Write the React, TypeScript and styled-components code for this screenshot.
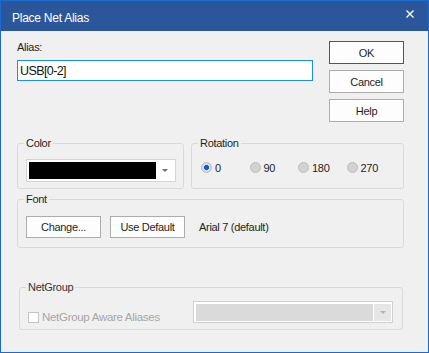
import React from "react";
import styled, { createGlobalStyle } from "styled-components";

const GlobalStyle = createGlobalStyle`
  html, body {
    margin: 0;
    padding: 0;
    background: #ffffff;
  }
  * {
    box-sizing: border-box;
  }
`;

const Window = styled.div`
  width: 429px;
  height: 353px;
  display: flex;
  flex-direction: column;
  border: 1px solid #1b6ad0;
  background: #f0f0f0;
  font-family: "Liberation Sans", Arial, sans-serif;
  font-size: 11px;
  color: #1e1e1e;
  letter-spacing: -0.3px;
`;

const TitleBar = styled.div`
  height: 30px;
  flex: 0 0 30px;
  display: flex;
  align-items: center;
  justify-content: space-between;
  padding: 4px 11px 0 11px;
  background: #2b579a;
  color: #ffffff;
  font-size: 12px;
  letter-spacing: -0.25px;
`;

const CloseIcon = styled.svg`
  width: 8px;
  height: 8px;
  margin-top: -9px;
  margin-right: 3px;
`;

const Body = styled.div`
  flex: 1;
  display: flex;
  flex-direction: column;
  padding: 10px 24px 0 16px;
`;

const TopRow = styled.div`
  display: flex;
  gap: 16px;
`;

const AliasCol = styled.div`
  flex: 0 0 296px;
  display: flex;
  flex-direction: column;
`;

const Label = styled.div`
  line-height: 13px;
  height: 13px;
  margin-bottom: 6px;
`;

const TextInput = styled.div`
  height: 21px;
  border: 1px solid #1a8cff;
  background: #ffffff;
  padding: 0 2px;
  display: flex;
  align-items: center;
  font-size: 12.5px;
  letter-spacing: -0.6px;
  color: #111;
`;

const BtnCol = styled.div`
  display: flex;
  flex-direction: column;
  gap: 6px;
`;

const Button = styled.div<{ $primary?: boolean; $h?: number }>`
  width: 75px;
  height: ${(p) => p.$h ?? 23}px;
  display: flex;
  align-items: center;
  justify-content: center;
  background: #fdfdfd;
  border: 1px solid ${(p) => (p.$primary ? "#0f62c6" : "#adadad")};
  color: #1e1e1e;
`;

const GroupRow = styled.div`
  display: flex;
  gap: 7px;
  margin-top: 14px;
`;

const Group = styled.fieldset<{ $w?: number; $h: number; $pt: number }>`
  margin: 0;
  ${(p) => (p.$w ? `width: ${p.$w}px; flex: 0 0 ${p.$w}px;` : "")}
  height: ${(p) => p.$h}px;
  border: 1px solid #d9d9d9;
  border-radius: 3px;
  padding: ${(p) => p.$pt}px 8px 0 8px;
  min-width: 0;
`;

const Legend = styled.legend<{ $muted?: boolean }>`
  padding: 0 2px;
  margin-left: -2px;
  line-height: 14px;
  font-size: 11px;
  color: ${(p) => (p.$muted ? "#333" : "#1e1e1e")};
`;

const ColorCombo = styled.div`
  width: 150px;
  height: 23px;
  border: 1px solid #d4d4d4;
  background: #ffffff;
  display: flex;
  align-items: center;
  padding: 0 2px;
`;

const Swatch = styled.div`
  width: 127px;
  height: 17px;
  background: #000000;
`;

const ArrowBox = styled.div<{ $disabled?: boolean }>`
  flex: 1;
  align-self: stretch;
  display: flex;
  align-items: center;
  justify-content: center;
  background: ${(p) => (p.$disabled ? "#e6e6e6" : "transparent")};
  &::after {
    content: "";
    border-left: 3px solid transparent;
    border-right: 3px solid transparent;
    border-top: 3px solid ${(p) => (p.$disabled ? "#b4b4b4" : "#707070")};
  }
`;

const RadioRow = styled.div`
  display: flex;
  height: 13px;
  margin-left: 1px;
`;

const RadioItem = styled.div`
  width: 55px;
  display: flex;
  align-items: center;
  gap: 3px;
`;

const RadioDot = styled.span<{ $on?: boolean }>`
  width: 11px;
  height: 11px;
  border-radius: 50%;
  border: 1px solid #bdbdbd;
  background: ${(p) =>
    p.$on
      ? "radial-gradient(circle, #0b5fd1 0 2.2px, #dadada 2.8px)"
      : "#d2d2d2"};
`;

const FontGroupWrap = styled.div`
  margin-top: 3px;
`;

const FontRow = styled.div`
  display: flex;
  align-items: center;
`;

const FontName = styled.span`
  margin-left: 14px;
`;

const NetWrap = styled.div`
  margin: 32px 1px 0 2px;
`;

const NetRow = styled.div`
  display: flex;
  align-items: flex-start;
  padding-right: 1px;
`;

const CheckLabel = styled.div`
  display: flex;
  align-items: center;
  gap: 3px;
  margin-top: 10px;
  color: #a6a6a6;
  font-size: 11.5px;
`;

const CheckBox = styled.span`
  width: 11px;
  height: 11px;
  border: 1px solid #c4c4c4;
  background: #ffffff;
`;

const DisabledCombo = styled.div`
  margin-left: auto;
  width: 200px;
  height: 22px;
  border: 1px solid #cfcfcf;
  background: #ffffff;
  padding: 2px 1px 1px 2px;
  display: flex;
  gap: 1px;
`;

const DisabledFill = styled.div`
  width: 177px;
  background: #dadada;
`;

export default function App() {
  return (
    <>
      <GlobalStyle />
      <Window>
        <TitleBar>
          <span>Place Net Alias</span>
          <CloseIcon viewBox="0 0 8 8">
            <path d="M0.5 0.5 L7.5 7.5 M7.5 0.5 L0.5 7.5" stroke="#ffffff" strokeWidth="1.4" />
          </CloseIcon>
        </TitleBar>
        <Body>
          <TopRow>
            <AliasCol>
              <Label>Alias:</Label>
              <TextInput>USB[0-2]</TextInput>
            </AliasCol>
            <BtnCol>
              <Button $primary>OK</Button>
              <Button>Cancel</Button>
              <Button>Help</Button>
            </BtnCol>
          </TopRow>

          <GroupRow>
            <Group $w={167} $h={53} $pt={9}>
              <Legend>Color</Legend>
              <ColorCombo>
                <Swatch />
                <ArrowBox />
              </ColorCombo>
            </Group>
            <Group $w={213} $h={53} $pt={11}>
              <Legend>Rotation</Legend>
              <RadioRow>
                {["0", "90", "180", "270"].map((r, i) => (
                  <RadioItem key={r}>
                    <RadioDot $on={i === 0} />
                    <span>{r}</span>
                  </RadioItem>
                ))}
              </RadioRow>
            </Group>
          </GroupRow>

          <FontGroupWrap>
            <Group $h={56} $pt={10}>
              <Legend>Font</Legend>
              <FontRow>
                <Button $h={22}>Change...</Button>
                <Button $h={22} style={{ marginLeft: 9 }}>
                  Use Default
                </Button>
                <FontName>Arial 7 (default)</FontName>
              </FontRow>
            </Group>
          </FontGroupWrap>

          <NetWrap>
            <Group $h={50} $pt={7}>
              <Legend $muted>NetGroup</Legend>
              <NetRow>
                <CheckLabel>
                  <CheckBox />
                  <span>NetGroup Aware Aliases</span>
                </CheckLabel>
                <DisabledCombo>
                  <DisabledFill />
                  <ArrowBox $disabled />
                </DisabledCombo>
              </NetRow>
            </Group>
          </NetWrap>
        </Body>
      </Window>
    </>
  );
}
